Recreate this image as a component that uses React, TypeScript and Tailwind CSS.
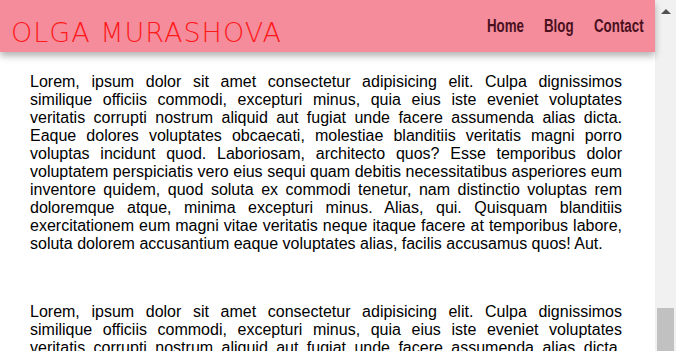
const lorem =
  "Lorem, ipsum dolor sit amet consectetur adipisicing elit. Culpa dignissimos similique officiis commodi, excepturi minus, quia eius iste eveniet voluptates veritatis corrupti nostrum aliquid aut fugiat unde facere assumenda alias dicta. Eaque dolores voluptates obcaecati, molestiae blanditiis veritatis magni porro voluptas incidunt quod. Laboriosam, architecto quos? Esse temporibus dolor voluptatem perspiciatis vero eius sequi quam debitis necessitatibus asperiores eum inventore quidem, quod soluta ex commodi tenetur, nam distinctio voluptas rem doloremque atque, minima excepturi minus. Alias, qui. Quisquam blanditiis exercitationem eum magni vitae veritatis neque itaque facere at temporibus labore, soluta dolorem accusantium eaque voluptates alias, facilis accusamus quos! Aut.";

// scaled widths so the narrow nav text keeps its real footprint
const links = [
  { label: "Home", w: "w-[37px]" },
  { label: "Blog", w: "w-[30px]" },
  { label: "Contact", w: "w-[51px]" },
];

function Header() {
  return (
    <header className="relative z-10 flex h-[52px] shrink-0 items-center justify-between bg-[#f48c9c] pl-[11px] pr-[10px] shadow-[0_4px_7px_rgba(0,0,0,0.3)]">
      <div className="mt-[12px] font-['DejaVu_Sans',sans-serif] text-[27px] leading-none font-extralight tracking-[1px] text-[#ff1a1a]">
        OLGA MURASHOVA
      </div>
      <nav className="mb-[1px] flex gap-[20px] font-['Liberation_Sans',Arial,sans-serif] text-[18px] leading-none font-bold text-[#4a1020]">
        {links.map((l) => (
          <a key={l.label} href="#" className={`block ${l.w}`}>
            <span className="inline-block origin-left scale-x-[0.74] whitespace-nowrap">{l.label}</span>
          </a>
        ))}
      </nav>
    </header>
  );
}

function Scrollbar() {
  return (
    <div className="flex w-[21px] shrink-0 flex-col items-center justify-between bg-[#f1f1f1]">
      <div className="mt-[9px] h-0 w-0 border-x-[5px] border-b-[5px] border-x-transparent border-b-[#505050]" />
      <div className="h-[43px] w-[17px] bg-[#c1c1c1]" />
    </div>
  );
}

export default function App() {
  return (
    <div className="flex h-screen overflow-hidden bg-white font-['Liberation_Sans',Arial,sans-serif] text-[16px] text-black">
      <div className="flex min-w-0 flex-1 flex-col">
        <Header />
        <main className="min-h-0 flex-1 overflow-hidden pt-[21px] pl-[30px] pr-[33px]">
          {[0, 1, 2].map((i) => (
            <p key={i} className="mb-[50px] text-justify leading-[18px]">
              {lorem}
            </p>
          ))}
        </main>
      </div>
      <Scrollbar />
    </div>
  );
}
